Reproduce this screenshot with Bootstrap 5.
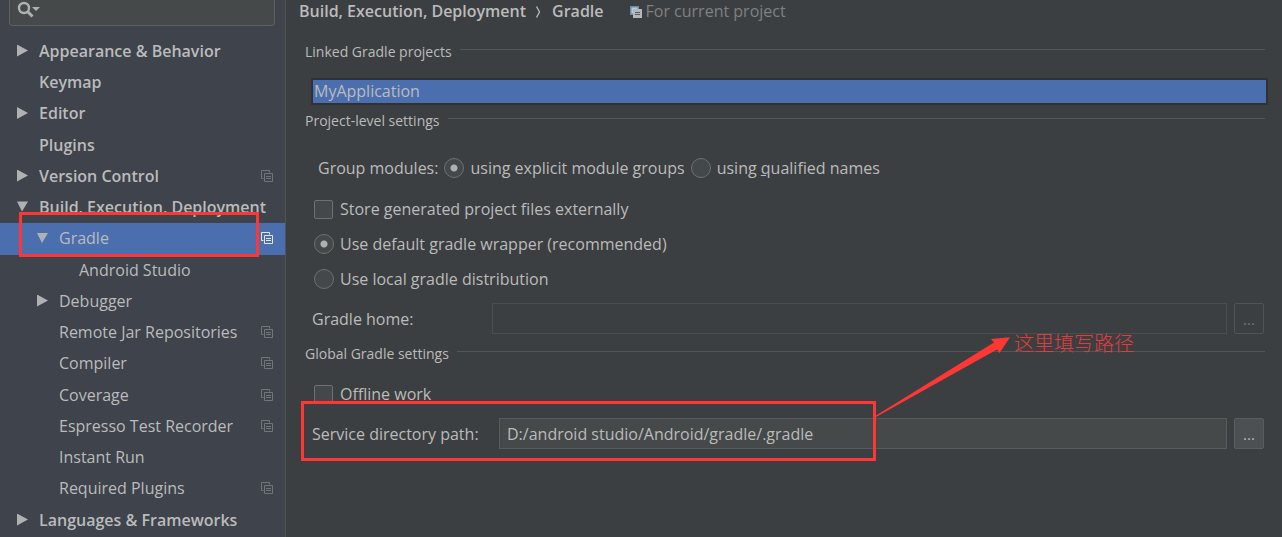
<!DOCTYPE html>
<html lang="en">
<head>
<meta charset="utf-8">
<meta name="viewport" content="width=device-width, initial-scale=1">
<title>Settings - Gradle</title>
<link href="https://cdn.jsdelivr.net/npm/bootstrap@5.3.0/dist/css/bootstrap.min.css" rel="stylesheet">
<style>
  :root { --ink: #bbbbbb; --panel: #3c3f41; --side: #3e434c; --sel: #4b6eaf; --line: #555555; --note: #fe3735; }
  body { background: var(--panel); color: var(--ink); font-family: "Open Sans", "Noto Sans", sans-serif; font-size: 16px; line-height: 24px; }
  .sidebar { width: 286px; background: var(--side); border-right: 1px solid #515457; }
  .search-box { height: 26px; margin: 0 10px 10px 9px; background: #45494a; border: 1px solid #5e6162; border-top: 0; border-radius: 0 0 4px 4px; padding-left: 7px; }
  .search-box input { background: transparent; border: 0; outline: 0; color: var(--ink); height: 22px; min-width: 0; }
  .tree a { display: flex; align-items: center; height: 31px; padding-right: 12px; padding-bottom: 2px; color: var(--ink); text-decoration: none; white-space: nowrap; }
  .tree li:nth-child(4n+3) a { height: 32px; }
  .tree a::before { content: ""; width: 12px; height: 12px; margin-right: 10px; flex: none; }
  .tree .closed::before { background: #afb1b3; clip-path: polygon(0 0, 11px 6px, 0 12px); }
  .tree .open::before { background: #afb1b3; clip-path: polygon(0 1px, 11px 1px, 5px 11px); }
  .lvl-1 { padding-left: 17px; font-weight: 600; }
  .lvl-2 { padding-left: 37px; }
  .lvl-3 { padding-left: 57px; }
  .tree .picked { background: var(--sel); }
  .tree svg { margin-left: auto; color: #72767b; }
  .tree .picked svg { color: #e4e8ee; }
  .crumbs { padding-left: 13px; margin-bottom: 18px; line-height: 23px; height: 24px; padding-bottom: 1px; }
  .crumbs strong { font-weight: 600; }
  .crumb-sep { margin: 0 6px; }
  .crumb-icon { margin-left: 26px; }
  .muted { color: #7f8182; }
  .pane { padding-right: 17px; }
  .group-head { display: flex; align-items: center; gap: 8px; margin: 0 0 0 19px; font-size: 14px; line-height: 20px; font-weight: 400; }
  .group-head::after { content: ""; flex: 1; height: 1px; margin-bottom: 6px; background: var(--line); }
  .project-list { margin: 16px -3px 6px 25px; border: 2px solid #2f3133; }
  .project-list li { background: var(--sel); line-height: 23px; padding-left: 1px; }
  .opt { display: flex; align-items: center; gap: 6px; }
  .opt input { appearance: none; width: 20px; height: 20px; margin: 0; flex: none; background: #43494a; border: 1px solid #6e7071; }
  .opt input[type=checkbox] { width: 19px; height: 19px; border-radius: 2px; margin-right: 1px; }
  .opt input[type=radio] { border-radius: 50%; }
  .opt input[type=radio]:checked { background: radial-gradient(circle, #afafaf 3px, #43494a 4px); }
  .opts { padding-left: 28px; }
  .project-opts { gap: 11px; padding-top: 25px; padding-bottom: 12px; }
  .modules { gap: 6px; margin-left: 4px; margin-bottom: 6px; }
  .offline { padding-top: 18px; padding-bottom: 12px; }
  .path-row { padding: 0 1px 0 26px; }
  .path-row input { flex: 1; min-width: 0; height: 31px; padding: 0 7px; color: var(--ink); background: #45494a; border: 1px solid #585b5c; }
  .path-row input:disabled { background: transparent; border-color: #4b4e50; }
  .path-row button { width: 30px; height: 31px; margin-left: 7px; padding: 0; color: var(--ink); background: #4c5052; border: 1px solid #5a5d5f; border-radius: 2px; line-height: 28px; font-size: 15px; }
  .path-row button:disabled { color: #777; background: transparent; border-color: #515456; }
  .home-row { margin-bottom: 10px; }
  .home-label { width: 180px; }
  .service-label { width: 187px; }
  .note-box { position: absolute; border: 3px solid var(--note); pointer-events: none; }
  .note-tree { left: 19px; top: -11px; width: 240px; height: 45px; z-index: 2; }
  .note-path { left: 15px; top: -17px; width: 575px; height: 60px; }
  .note-arrow { position: absolute; left: 590px; top: -82px; }
  .note-text { position: absolute; left: 728px; top: -89px; font: 300 20px/28px "Noto Sans CJK SC", sans-serif; color: #e23c3c; white-space: nowrap; }
</style>
</head>
<body>
<svg class="d-none" aria-hidden="true">
  <symbol id="copy" viewBox="0 0 12 12"><path d="M2.5 8.500H.5v-8h8v2M3.500 3.500h8v8h-8zM5 6.500h5M5 8.500h5" fill="none" stroke="currentColor"/></symbol>
</svg>
<div class="d-flex min-vh-100">
  <nav class="sidebar flex-shrink-0" aria-label="Settings">
    <div class="search-box d-flex">
      <svg class="flex-shrink-0" width="24" height="20" viewBox="0 0 24 20" fill="none" aria-hidden="true"><circle cx="7" cy="8" r="5" stroke="#afb1b3" stroke-width="2.400"/><path d="m10.500 11.500 5 5" stroke="#afb1b3" stroke-width="3"/><path d="M15 7h8l-4 4z" fill="#afb1b3"/></svg>
      <input class="flex-grow-1" type="search" aria-label="Search settings">
    </div>
    <ul class="tree list-unstyled mb-0">
      <li><a href="#" class="lvl-1 closed">Appearance &amp; Behavior</a></li>
      <li><a href="#" class="lvl-1">Keymap</a></li>
      <li><a href="#" class="lvl-1 closed">Editor</a></li>
      <li><a href="#" class="lvl-1">Plugins</a></li>
      <li><a href="#" class="lvl-1 closed">Version Control<svg width="12" height="12"><use href="#copy"/></svg></a></li>
      <li><a href="#" class="lvl-1 open">Build, Execution, Deployment</a></li>
      <li class="position-relative"><a href="#" class="lvl-2 open picked">Gradle<svg width="12" height="12"><use href="#copy"/></svg></a><span class="note-box note-tree"></span></li>
      <li><a href="#" class="lvl-3">Android Studio</a></li>
      <li><a href="#" class="lvl-2 closed">Debugger</a></li>
      <li><a href="#" class="lvl-2">Remote Jar Repositories<svg width="12" height="12"><use href="#copy"/></svg></a></li>
      <li><a href="#" class="lvl-2">Compiler<svg width="12" height="12"><use href="#copy"/></svg></a></li>
      <li><a href="#" class="lvl-2">Coverage<svg width="12" height="12"><use href="#copy"/></svg></a></li>
      <li><a href="#" class="lvl-2">Espresso Test Recorder<svg width="12" height="12"><use href="#copy"/></svg></a></li>
      <li><a href="#" class="lvl-2">Instant Run</a></li>
      <li><a href="#" class="lvl-2">Required Plugins<svg width="12" height="12"><use href="#copy"/></svg></a></li>
      <li><a href="#" class="lvl-1 closed">Languages &amp; Frameworks</a></li>
    </ul>
  </nav>
  <main class="pane flex-grow-1">
    <div class="crumbs d-flex align-items-center">
      <strong>Build, Execution, Deployment</strong>
      <svg class="crumb-sep" width="14" height="14" viewBox="0 0 14 14" fill="none" aria-hidden="true"><path d="m4.500 1.500 3 5.500-3 5.500" stroke="#bbb" stroke-width="1.300"/></svg>
      <strong>Gradle</strong>
      <svg class="crumb-icon" width="12" height="12" viewBox="0 0 12 12" aria-hidden="true"><path d="M0 0h9v3H3v6H0z" fill="#5d92ad"/><path d="M1.500 1.500h6V3H3v4.500H1.500z" fill="#c4c7c9"/><path d="M3 3h9v9H3z" fill="#b4b8ba"/><path d="M5 6.500h5M5 8.500h5" stroke="#55595b"/></svg>
      <span class="muted ms-1">For current project</span>
    </div>
    <h2 class="group-head">Linked Gradle projects</h2>
    <ul class="project-list list-unstyled"><li>MyApplication</li></ul>
    <h2 class="group-head">Project-level settings</h2>
    <div class="opts project-opts d-flex flex-column">
      <div class="modules d-flex align-items-center">
        <span>Group modules:</span>
        <label class="opt"><input type="radio" name="modules" checked><span>using explicit module <u>g</u>roups</span></label>
        <label class="opt"><input type="radio" name="modules"><span>using <u>q</u>ualified names</span></label>
      </div>
      <label class="opt"><input type="checkbox"><span>Store generated project files externally</span></label>
      <label class="opt"><input type="radio" name="dist" checked><span>Use default gradle wrapper (recommended)</span></label>
      <label class="opt"><input type="radio" name="dist"><span>Use local gradle distribution</span></label>
    </div>
    <div class="path-row home-row d-flex align-items-center">
      <label class="home-label" for="home">Gradle home:</label>
      <input id="home" type="text" disabled>
      <button type="button" disabled aria-label="Browse Gradle home">...</button>
    </div>
    <h2 class="group-head">Global Gradle settings</h2>
    <div class="opts offline"><label class="opt"><input type="checkbox"><span>Offline work</span></label></div>
    <div class="path-row d-flex align-items-center position-relative">
      <label class="service-label" for="service">Service directory path:</label>
      <input id="service" type="text" value="D:/android studio/Android/gradle/.gradle">
      <button type="button" aria-label="Browse service directory">...</button>
      <span class="note-box note-path"></span>
      <svg class="note-arrow" width="135" height="82" viewBox="0 0 135 82" aria-hidden="true"><path d="M0 79.500 118 6.500 115 3 134 1.300 123.500 17 121 13.500 0 81z" fill="#fe3735"/></svg>
      <span class="note-text" lang="zh">这里填写路径</span>
    </div>
  </main>
</div>
<script src="https://cdn.jsdelivr.net/npm/bootstrap@5.3.0/dist/js/bootstrap.bundle.min.js"></script>
</body>
</html>
